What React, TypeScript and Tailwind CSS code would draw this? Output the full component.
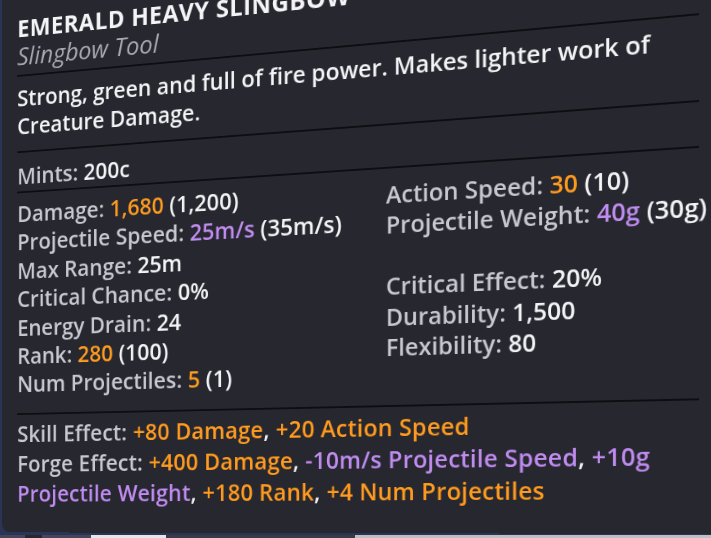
import React from "react";

const OR = "text-[#ff9b1f]";
const PU = "text-[#c18cf0]";
const WH = "text-[#f4f4f6]";

function Stat({ label, children }: { label: string; children?: React.ReactNode }) {
  return (
    <div className="whitespace-nowrap h-[32.4px] leading-[32.4px]">
      <span className="text-[#c8c9ce]">{label}: </span>
      {children}
    </div>
  );
}

function Sep() {
  return <div className="h-[2px] bg-[#0e0e12] mr-[12px]" />;
}

export default function App() {
  return (
    <div className="relative w-[711px] h-[538px] overflow-hidden bg-[#2b3356] [perspective:1000px] [perspective-origin:355px_521px]">
      <div className="h-[535px]" />
      <div className="flex h-[3px]">
        <div className="w-[25px] bg-[#45465a]" />
        <div className="w-[17px] bg-[#26272f]" />
        <div className="w-[49px] bg-[#45465a]" />
        <div className="w-[75px] bg-[#e6e6e8]" />
        <div className="w-[189px] bg-[#3a3b44]" />
        <div className="flex-1 bg-[#bfbfc4]" />
      </div>
      <div
        className="absolute left-[-63px] top-[-80px] w-[775px] h-[614px] bg-[#26272f] rounded-bl-[10px] origin-right [transform:rotateY(-10.8deg)] pl-[19px] pt-[22px] font-['Open_Sans',sans-serif] font-semibold text-[25px]"
      >
        <div className={`${WH} h-[34px] leading-[34px] uppercase font-bold text-[27px] tracking-[0.5px]`}>EMERALD HEAVY SLINGBOW</div>
        <div className="h-[28px] leading-[28px] italic font-normal text-[#a9aab1] text-[28px]">Slingbow Tool</div>
        <div className="h-[8px]" />
        <Sep />
        <div className="h-[8px]" />
        <div className={`${WH} leading-[32px] whitespace-nowrap`}>
          Strong, green and full of fire power. Makes lighter work of
          <br />
          Creature Damage.
        </div>
        <div className="h-[13px]" />
        <Sep />
        <div className="h-[10px]" />
        <div className="h-[32px] leading-[32px] whitespace-nowrap">
          <span className="text-[#c8c9ce]">Mints: </span>
          <span className={WH}>200c</span>
        </div>
        <div className="h-[2px]" />
        <Sep />
        <div className="h-[7px]" />
        <div className="grid grid-cols-[426px_1fr]">
          <div className="flex flex-col">
            <Stat label="Damage">
              <span className={OR}>1,680</span> <span className={WH}>(1,200)</span>
            </Stat>
            <Stat label="Projectile Speed">
              <span className={PU}>25m/s</span> <span className={WH}>(35m/s)</span>
            </Stat>
            <Stat label="Max Range">
              <span className={WH}>25m</span>
            </Stat>
            <Stat label="Critical Chance">
              <span className={WH}>0%</span>
            </Stat>
            <Stat label="Energy Drain">
              <span className={WH}>24</span>
            </Stat>
            <Stat label="Rank">
              <span className={OR}>280</span> <span className={WH}>(100)</span>
            </Stat>
            <Stat label="Num Projectiles">
              <span className={OR}>5</span> <span className={WH}>(1)</span>
            </Stat>
          </div>
          <div className="flex flex-col pt-[4px]">
            <Stat label="Action Speed">
              <span className={OR}>30</span> <span className={WH}>(10)</span>
            </Stat>
            <Stat label="Projectile Weight">
              <span className={PU}>40g</span> <span className={WH}>(30g)</span>
            </Stat>
            <div className="h-[32.4px]" />
            <Stat label="Critical Effect">
              <span className={WH}>20%</span>
            </Stat>
            <Stat label="Durability">
              <span className={WH}>1,500</span>
            </Stat>
            <Stat label="Flexibility">
              <span className={WH}>80</span>
            </Stat>
          </div>
        </div>
        <div className="h-[17px]" />
        <Sep />
        <div className="h-[4px]" />
        <div className="leading-[34px] tracking-[0.2px]">
          <div className="whitespace-nowrap">
            <span className="text-[#c8c9ce]">Skill Effect: </span>
            <span className={OR}>+80 Damage</span>
            <span className={WH}>, </span>
            <span className={OR}>+20 Action Speed</span>
          </div>
          <div className="whitespace-nowrap">
            <span className="text-[#c8c9ce]">Forge Effect: </span>
            <span className={OR}>+400 Damage</span>
            <span className={WH}>, </span>
            <span className={PU}>-10m/s Projectile Speed</span>
            <span className={WH}>, </span>
            <span className={PU}>+10g</span>
          </div>
          <div className="whitespace-nowrap">
            <span className={PU}>Projectile Weight</span>
            <span className={WH}>, </span>
            <span className={OR}>+180 Rank</span>
            <span className={WH}>, </span>
            <span className={OR}>+4 Num Projectiles</span>
          </div>
        </div>
      </div>
    </div>
  );
}
